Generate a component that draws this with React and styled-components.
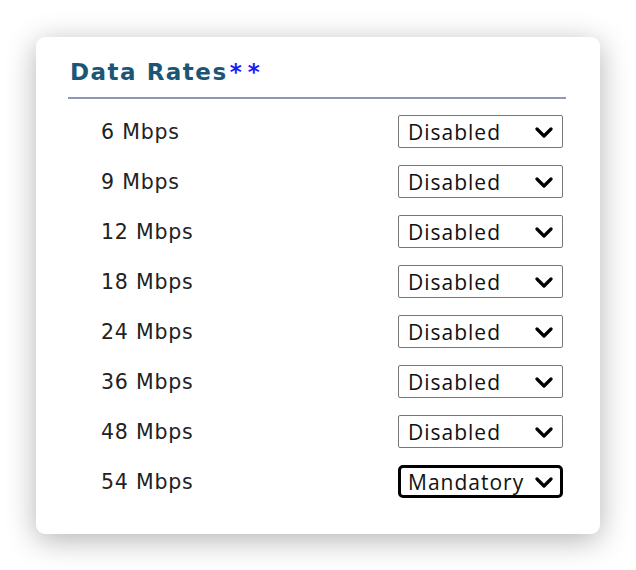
import styled, { createGlobalStyle } from 'styled-components';

const GlobalStyle = createGlobalStyle`
    html, body {
        margin: 0;
        padding: 0;
        background: #ffffff;
    }
`;

const Page = styled.div`
    padding: 37px 36px 36px 36px;
`;

const Card = styled.div`
    width: 564px;
    height: 497px;
    box-sizing: border-box;
    background: #ffffff;
    border-radius: 9px;
    box-shadow: 0 6px 30px rgba(0, 0, 0, 0.3);
    padding: 20px 34px 0 32px;
`;

const Title = styled.h2`
    margin: 0;
    padding: 0 0 0 2px;
    font-family: 'DejaVu Sans', Verdana, sans-serif;
    font-size: 23px;
    letter-spacing: 1.5px;
    font-weight: bold;
    color: #1c5677;
    line-height: 30px;
    height: 40px;
    border-bottom: 2px solid #8f96b6;

    span {
        color: #1a1aff;
        letter-spacing: 6px;
        margin-left: 2px;
    }
`;

const List = styled.div`
    display: flex;
    flex-direction: column;
    gap: 17px;
    padding: 16px 3px 0 33px;
`;

const Row = styled.div`
    display: flex;
    align-items: center;
    justify-content: space-between;
    height: 33px;
`;

const Label = styled.span`
    font-family: 'DejaVu Sans', Verdana, sans-serif;
    font-size: 20.5px;
    letter-spacing: 0.8px;
    color: #222222;
`;

const SelectWrap = styled.div`
    position: relative;
    width: 165px;
    height: 33px;
`;

const Select = styled.select`
    appearance: none;
    width: 100%;
    height: 100%;
    box-sizing: border-box;
    margin: 0;
    background: #ffffff;
    border: ${p => (p.$focused ? '3px solid #000000' : '1px solid #767676')};
    border-radius: ${p => (p.$focused ? '5px' : '2px')};
    padding: 0 0 0 ${p => (p.$focused ? '7px' : '9px')};
    font-family: 'Open Sans', 'Noto Sans', sans-serif;
    font-size: 21px;
    letter-spacing: 1px;
    color: #111111;
    outline: none;
`;

const Chevron = styled.svg`
    position: absolute;
    right: 10px;
    top: 12px;
    width: 18px;
    height: 11px;
    pointer-events: none;
`;

const rates = [
    { label: '6 Mbps', value: 'Disabled' },
    { label: '9 Mbps', value: 'Disabled' },
    { label: '12 Mbps', value: 'Disabled' },
    { label: '18 Mbps', value: 'Disabled' },
    { label: '24 Mbps', value: 'Disabled' },
    { label: '36 Mbps', value: 'Disabled' },
    { label: '48 Mbps', value: 'Disabled' },
    { label: '54 Mbps', value: 'Mandatory', focused: true },
];

function App() {
    return (
        <>
            <GlobalStyle />
            <Page>
                <Card>
                    <Title>
                        Data Rates<span>**</span>
                    </Title>
                    <List>
                        {rates.map(rate => (
                            <Row key={rate.label}>
                                <Label>{rate.label}</Label>
                                <SelectWrap>
                                    <Select
                                        defaultValue={rate.value}
                                        $focused={rate.focused}
                                    >
                                        <option>Mandatory</option>
                                        <option>Supported</option>
                                        <option>Disabled</option>
                                    </Select>
                                    <Chevron viewBox="0 0 18 11">
                                        <path
                                            d="M2 2 L9 9 L16 2"
                                            fill="none"
                                            stroke="#000"
                                            strokeWidth="3.2"
                                            strokeLinecap="round"
                                            strokeLinejoin="round"
                                        />
                                    </Chevron>
                                </SelectWrap>
                            </Row>
                        ))}
                    </List>
                </Card>
            </Page>
        </>
    );
}

export default App;
